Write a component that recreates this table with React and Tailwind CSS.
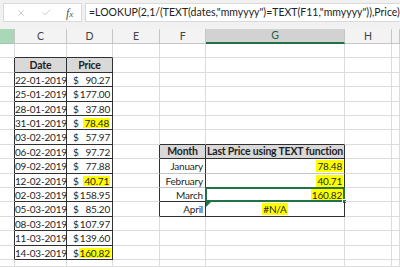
import { X, Check } from "lucide-react";

const COLS = ["w-[15px]", "w-[52px]", "w-[46px]", "w-[47px]", "w-[46px]", "w-[139px]", "w-[47px]", "w-[8px]"];
const LETTERS = ["", "C", "D", "E", "F", "G", "H", ""];
const HEIGHTS = [
  "h-[14px]", "h-[15px]", "h-[14px]", "h-[15px]", "h-[14px]", "h-[14px]", "h-[15px]", "h-[14px]",
  "h-[15px]", "h-[14px]", "h-[14px]", "h-[15px]", "h-[14px]", "h-[15px]", "h-[14px]", "h-[7px]",
];

const prices = [
  ["22-01-2019", "90.27"],
  ["25-01-2019", "177.00"],
  ["28-01-2019", "37.80"],
  ["31-01-2019", "78.48", true],
  ["03-02-2019", "57.97"],
  ["06-02-2019", "97.72"],
  ["09-02-2019", "77.88"],
  ["12-02-2019", "40.71", true],
  ["02-03-2019", "158.95"],
  ["05-03-2019", "85.20"],
  ["08-03-2019", "107.97"],
  ["11-03-2019", "139.60"],
  ["14-03-2019", "160.82", true],
];

const months = [
  ["January", "78.48"],
  ["February", "40.71"],
  ["March", "160.82"],
  ["April", "#N/A"],
];

const inPrices = (r, c) => r >= 1 && r <= 14 && (c === 1 || c === 2);
const inMonths = (r, c) => r >= 7 && r <= 11 && (c === 4 || c === 5);

const Mark = ({ children }) => <span className="bg-[#ffff00] px-[1px]">{children}</span>;

function cellContent(r, c) {
  if (r === 1 && c === 1) return <span className="w-full text-center font-bold text-[10.5px]">Date</span>;
  if (r === 1 && c === 2) return <span className="w-full text-center font-bold text-[10.5px]">Price</span>;
  if (r >= 2 && r <= 14 && c === 1) return <span className="w-full text-right pr-[3px]">{prices[r - 2][0]}</span>;
  if (r >= 2 && r <= 14 && c === 2) {
    const [, p, hl] = prices[r - 2];
    return (
      <span className="w-full flex justify-between pl-[6px] pr-[2px]">
        <span>$</span>
        {hl ? <Mark>{p}</Mark> : <span>{p}</span>}
      </span>
    );
  }
  if (r === 7 && c === 4) return <span className="w-full text-center font-bold text-[10.5px]">Month</span>;
  if (r === 7 && c === 5)
    return <span className="w-full text-center font-bold text-[10.5px]">Last Price using TEXT function</span>;
  if (r >= 8 && r <= 11 && c === 4) return <span className="w-full text-right pr-[2px]">{months[r - 8][0]}</span>;
  if (r >= 8 && r <= 10 && c === 5)
    return (
      <span className="w-full text-right pr-[1px]">
        <Mark>{months[r - 8][1]}</Mark>
      </span>
    );
  if (r === 11 && c === 5)
    return (
      <span className="w-full text-center">
        <Mark>#N/A</Mark>
      </span>
    );
  return null;
}

function Cell({ r, c }) {
  const darkRight = inPrices(r, c) || inPrices(r, c + 1) || inMonths(r, c) || inMonths(r, c + 1);
  const lightBottom = inMonths(r, c) && (r === 8 || r === 9);
  const darkBottom = !lightBottom && (inPrices(r, c) || inPrices(r + 1, c) || inMonths(r, c) || inMonths(r + 1, c));
  const header = (r === 1 && (c === 1 || c === 2)) || (r === 7 && (c === 4 || c === 5));
  const selected = r === 10 && c === 5;

  return (
    <div
      className={`${COLS[c]} shrink-0 relative flex items-center border-r border-b whitespace-nowrap
        ${darkRight ? "border-r-[#303030]" : "border-r-[#dcdcdc]"}
        ${darkBottom ? "border-b-[#303030]" : lightBottom ? "border-b-[#c4c4c4]" : "border-b-[#dcdcdc]"}
        ${header ? "bg-[#d9d9d9]" : ""}`}
    >
      {cellContent(r, c)}
      {selected && (
        <>
          <div className="absolute -left-[1px] -top-[1px] -right-[1px] -bottom-[1px] border-2 border-[#217346] pointer-events-none" />
          <div className="absolute -right-[3px] -bottom-[3px] w-[5px] h-[5px] bg-[#217346] border border-white" />
        </>
      )}
      {r === 11 && c === 5 && (
        <div className="absolute left-0 top-0 w-0 h-0 border-t-[5px] border-t-[#217346] border-r-[5px] border-r-transparent" />
      )}
    </div>
  );
}

export default function App() {
  return (
    <div
      className="w-[400px] h-[267px] overflow-hidden bg-white text-[#1f1f1f] text-[10px] tracking-[-0.2px] leading-none"
      style={{ fontFamily: "Lato, 'Open Sans', sans-serif" }}
    >
      {/* formula bar */}
      <div className="h-[29px] bg-[#f1f1f1] flex items-start gap-[3px] pt-[3px] pl-[3px]">
        <div className="w-[79px] h-[19px] bg-white border border-[#d9d9d9] flex items-center text-[#a6a6a6]">
          <X size={10} strokeWidth={1.3} className="ml-[12px]" />
          <Check size={11} strokeWidth={1.3} className="ml-[15px]" />
          <span
            className="ml-[14px] text-[#555] text-[12px] italic"
            style={{ fontFamily: "'Liberation Serif', serif" }}
          >
            f<span className="text-[9px]">x</span>
          </span>
        </div>
        <div className="flex-1 h-[19px] bg-white border border-r-0 border-[#d9d9d9] flex items-center pl-[3px] text-[10.5px] tracking-normal text-[#222] whitespace-nowrap">
          =LOOKUP(2,1/(TEXT(dates,"mmyyyy")=TEXT(F11,"mmyyyy")),Price)
        </div>
      </div>

      {/* column headers */}
      <div className="flex h-[15px]">
        {COLS.map((w, c) => (
          <div
            key={c}
            className={`${w} shrink-0 flex items-center justify-center border-r border-r-[#c6c6c6] text-[10.5px]
              ${c === 0 ? "bg-[#a9d8b9] border-b border-b-[#9fc9ad]" : c === 5 ? "bg-[#d2d2d2] border-b-2 border-b-[#217346] text-[#1f5f3a]" : "bg-[#f3f3f3] border-b border-b-[#c6c6c6] text-[#444]"}`}
          >
            {LETTERS[c]}
          </div>
        ))}
      </div>

      {/* sheet */}
      {HEIGHTS.map((h, r) => (
        <div key={r} className={`flex ${h}`}>
          {COLS.map((_, c) => (
            <Cell key={c} r={r} c={c} />
          ))}
        </div>
      ))}
    </div>
  );
}
